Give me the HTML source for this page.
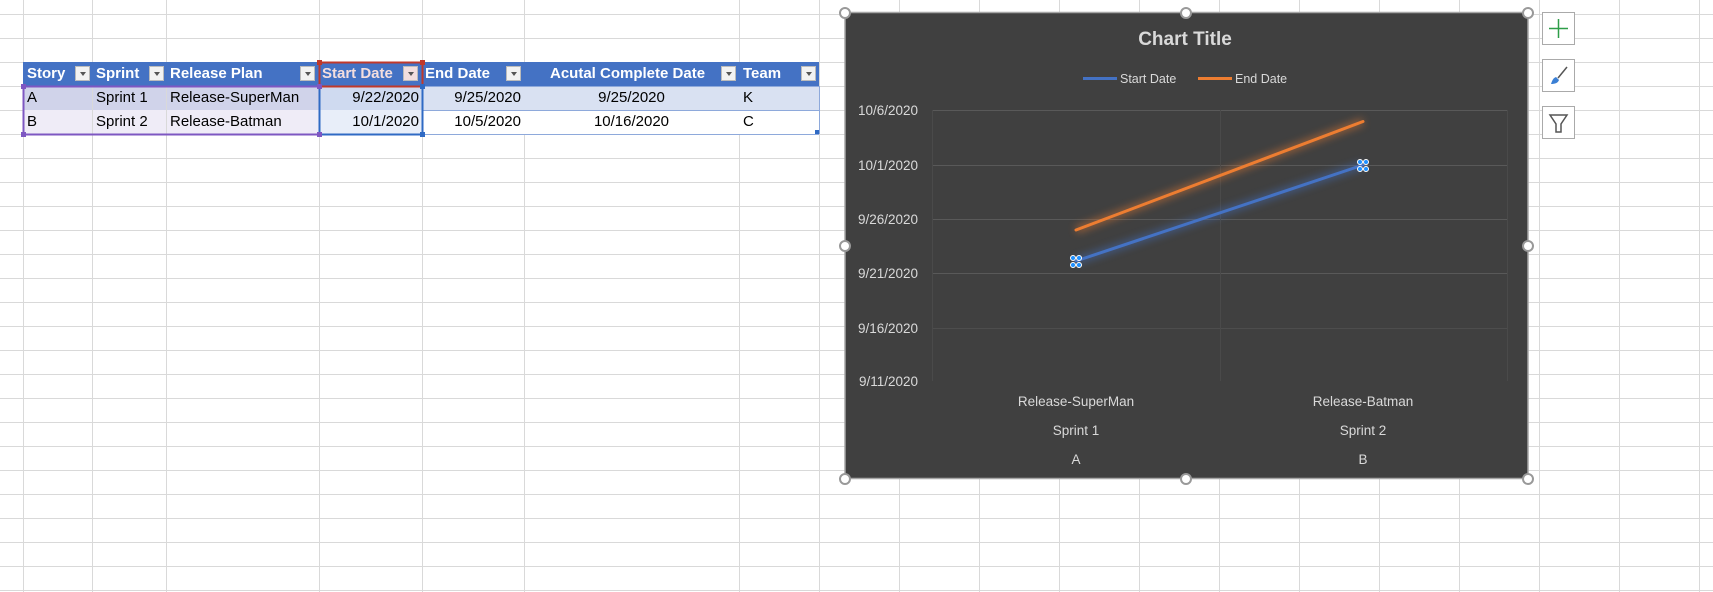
<!DOCTYPE html>
<html><head><meta charset="utf-8"><style>
body{margin:0;width:1713px;height:592px;overflow:hidden;background:#fff;font-family:"Liberation Sans",sans-serif;position:relative}
.a{position:absolute}
.t{position:absolute;font-size:15px;line-height:24px;white-space:nowrap;color:#000}
.h{color:#fff;font-weight:bold}
.dd{position:absolute;width:15px;height:15px;background:#f2f2f2;border:1px solid #bbb;box-sizing:border-box;top:66px}
.dd:after{content:"";position:absolute;left:4px;top:5px;border-left:3px solid transparent;border-right:3px solid transparent;border-top:4px solid #555}
.hd{position:absolute;width:12px;height:12px;border-radius:50%;background:#fff;border:2px solid #999;box-sizing:border-box}
.btn{position:absolute;left:1542px;width:33px;height:33px;border:1px solid #aaa;box-sizing:border-box;background:#fff}
</style></head><body>
<svg class="a" style="left:0;top:0" width="1713" height="592">
<g stroke="#d9d9d9" stroke-width="1">
<line x1="0" y1="14.5" x2="1713" y2="14.5"/><line x1="0" y1="38.5" x2="1713" y2="38.5"/><line x1="0" y1="62.5" x2="1713" y2="62.5"/><line x1="0" y1="86.5" x2="1713" y2="86.5"/><line x1="0" y1="110.5" x2="1713" y2="110.5"/><line x1="0" y1="134.5" x2="1713" y2="134.5"/><line x1="0" y1="158.5" x2="1713" y2="158.5"/><line x1="0" y1="182.5" x2="1713" y2="182.5"/><line x1="0" y1="206.5" x2="1713" y2="206.5"/><line x1="0" y1="230.5" x2="1713" y2="230.5"/><line x1="0" y1="254.5" x2="1713" y2="254.5"/><line x1="0" y1="278.5" x2="1713" y2="278.5"/><line x1="0" y1="302.5" x2="1713" y2="302.5"/><line x1="0" y1="326.5" x2="1713" y2="326.5"/><line x1="0" y1="350.5" x2="1713" y2="350.5"/><line x1="0" y1="374.5" x2="1713" y2="374.5"/><line x1="0" y1="398.5" x2="1713" y2="398.5"/><line x1="0" y1="422.5" x2="1713" y2="422.5"/><line x1="0" y1="446.5" x2="1713" y2="446.5"/><line x1="0" y1="470.5" x2="1713" y2="470.5"/><line x1="0" y1="494.5" x2="1713" y2="494.5"/><line x1="0" y1="518.5" x2="1713" y2="518.5"/><line x1="0" y1="542.5" x2="1713" y2="542.5"/><line x1="0" y1="566.5" x2="1713" y2="566.5"/><line x1="0" y1="590.5" x2="1713" y2="590.5"/>
<line x1="23.5" y1="0" x2="23.5" y2="592"/><line x1="92.5" y1="0" x2="92.5" y2="592"/><line x1="166.5" y1="0" x2="166.5" y2="592"/><line x1="319.5" y1="0" x2="319.5" y2="592"/><line x1="422.5" y1="0" x2="422.5" y2="592"/><line x1="524.5" y1="0" x2="524.5" y2="592"/><line x1="739.5" y1="0" x2="739.5" y2="592"/><line x1="819.5" y1="0" x2="819.5" y2="592"/><line x1="899.5" y1="0" x2="899.5" y2="592"/><line x1="979.5" y1="0" x2="979.5" y2="592"/><line x1="1059.5" y1="0" x2="1059.5" y2="592"/><line x1="1139.5" y1="0" x2="1139.5" y2="592"/><line x1="1219.5" y1="0" x2="1219.5" y2="592"/><line x1="1299.5" y1="0" x2="1299.5" y2="592"/><line x1="1379.5" y1="0" x2="1379.5" y2="592"/><line x1="1459.5" y1="0" x2="1459.5" y2="592"/><line x1="1539.5" y1="0" x2="1539.5" y2="592"/><line x1="1619.5" y1="0" x2="1619.5" y2="592"/><line x1="1699.5" y1="0" x2="1699.5" y2="592"/>
</g>
<rect x="23" y="62" width="796" height="24" fill="#4472c4"/>
<rect x="23" y="86" width="796" height="24" fill="#d9e1f2"/>
<rect x="23" y="110" width="796" height="24" fill="#fff"/>
<rect x="23" y="86" width="296" height="24" fill="#d0d3ea"/>
<rect x="23" y="110" width="296" height="24" fill="#efecf7"/>
<rect x="319" y="86" width="103" height="24" fill="#cfdaf0"/>
<rect x="319" y="110" width="103" height="24" fill="#e8eef9"/>
<g stroke="#d9d9d9"><line x1="92.5" y1="86" x2="92.5" y2="134"/><line x1="166.5" y1="86" x2="166.5" y2="134"/></g>
<line x1="422" y1="86.5" x2="819" y2="86.5" stroke="#8ea9db"/><line x1="422" y1="110.5" x2="819" y2="110.5" stroke="#8ea9db"/><line x1="422" y1="134.5" x2="819" y2="134.5" stroke="#8ea9db"/>
<line x1="819.5" y1="86" x2="819.5" y2="134" stroke="#8ea9db"/>
<rect x="23.5" y="86.5" width="296" height="48" fill="none" stroke="#7e57c2" stroke-width="2"/>
<rect x="319.5" y="86.5" width="103" height="48" fill="none" stroke="#2f6ac4" stroke-width="2"/>
<rect x="319.5" y="62.5" width="103" height="24" fill="none" stroke="#c0392b" stroke-width="2"/>
<g fill="#7e57c2"><rect x="21" y="84" width="5" height="5"/><rect x="317" y="84" width="5" height="5"/><rect x="21" y="132" width="5" height="5"/><rect x="317" y="132" width="5" height="5"/></g>
<g fill="#2f6ac4"><rect x="420" y="84" width="5" height="5"/><rect x="420" y="132" width="5" height="5"/><rect x="815" y="130" width="4" height="4"/></g>
<g fill="#c0392b"><rect x="317" y="60" width="5" height="5"/><rect x="420" y="60" width="5" height="5"/></g>
</svg>
<div class="t h" style="left:27px;top:62px">Story</div>
<div class="t h" style="left:96px;top:62px">Sprint</div>
<div class="t h" style="left:170px;top:62px">Release Plan</div>
<div class="t h" style="left:322px;top:62px;color:#f4dede">Start Date</div>
<div class="t h" style="left:425px;top:62px">End Date</div>
<div class="t h" style="left:550px;top:62px">Acutal Complete Date</div>
<div class="t h" style="left:743px;top:62px">Team</div>
<div class="dd" style="left:75px"></div><div class="dd" style="left:149px"></div><div class="dd" style="left:300px"></div><div class="dd" style="left:403px;background:#f2dede"></div><div class="dd" style="left:506px"></div><div class="dd" style="left:721px"></div><div class="dd" style="left:801px"></div>
<div class="t" style="left:27px;top:86px">A</div><div class="t" style="left:96px;top:86px">Sprint 1</div><div class="t" style="left:170px;top:86px">Release-SuperMan</div><div class="t" style="left:322px;top:86px;width:97px;text-align:right">9/22/2020</div><div class="t" style="left:425px;top:86px;width:96px;text-align:right">9/25/2020</div><div class="t" style="left:524px;top:86px;width:215px;text-align:center">9/25/2020</div><div class="t" style="left:743px;top:86px">K</div>
<div class="t" style="left:27px;top:110px">B</div><div class="t" style="left:96px;top:110px">Sprint 2</div><div class="t" style="left:170px;top:110px">Release-Batman</div><div class="t" style="left:322px;top:110px;width:97px;text-align:right">10/1/2020</div><div class="t" style="left:425px;top:110px;width:96px;text-align:right">10/5/2020</div><div class="t" style="left:524px;top:110px;width:215px;text-align:center">10/16/2020</div><div class="t" style="left:743px;top:110px">C</div>

<svg class="a" style="left:0;top:0" width="1713" height="592">
<defs><filter id="gl" x="-20%" y="-50%" width="140%" height="200%"><feGaussianBlur stdDeviation="4"/></filter></defs>
<rect x="845" y="12.5" width="683" height="466" fill="#404040" stroke="#a6a6a6" stroke-width="1.5"/>
<g stroke="#595959" stroke-width="1"><line x1="932" y1="110.5" x2="1507" y2="110.5"/><line x1="932" y1="165.5" x2="1507" y2="165.5"/><line x1="932" y1="219.5" x2="1507" y2="219.5"/><line x1="932" y1="273.5" x2="1507" y2="273.5"/><line x1="932" y1="328.5" x2="1507" y2="328.5" stroke="#4d4d4d"/><line x1="932.5" y1="110" x2="932.5" y2="381" stroke="#4a4a4a"/><line x1="1220.5" y1="110" x2="1220.5" y2="381" stroke="#4a4a4a"/><line x1="1507.5" y1="110" x2="1507.5" y2="381" stroke="#4a4a4a"/></g>
<text x="1185" y="45" fill="#d9d9d9" font-size="19" font-weight="bold" text-anchor="middle" font-family="Liberation Sans">Chart Title</text>
<line x1="1083" y1="78.5" x2="1117" y2="78.5" stroke="#4472c4" stroke-width="3"/>
<text x="1120" y="83" fill="#d9d9d9" font-size="12.5" font-family="Liberation Sans">Start Date</text>
<line x1="1198" y1="78.5" x2="1232" y2="78.5" stroke="#ed7d31" stroke-width="3"/>
<text x="1235" y="83" fill="#d9d9d9" font-size="12.5" font-family="Liberation Sans">End Date</text>
<g fill="#d9d9d9" font-size="13.5" font-family="Liberation Sans" text-anchor="end"><text x="918" y="115">10/6/2020</text><text x="918" y="170">10/1/2020</text><text x="918" y="224">9/26/2020</text><text x="918" y="278">9/21/2020</text><text x="918" y="333">9/16/2020</text><text x="918" y="386">9/11/2020</text></g>
<g fill="#d9d9d9" font-size="13.5" font-family="Liberation Sans" text-anchor="middle"><text x="1076" y="406">Release-SuperMan</text><text x="1363" y="406">Release-Batman</text><text x="1076" y="435">Sprint 1</text><text x="1363" y="435">Sprint 2</text><text x="1076" y="464">A</text><text x="1363" y="464">B</text></g>
<line x1="1076" y1="230" x2="1363" y2="121.5" stroke="#ed7d31" stroke-width="7" opacity=".5" filter="url(#gl)"/>
<line x1="1076" y1="261" x2="1363" y2="165" stroke="#4472c4" stroke-width="7" opacity=".5" filter="url(#gl)"/>
<line x1="1076" y1="230" x2="1363" y2="121.5" stroke="#ed7d31" stroke-width="3" stroke-linecap="round"/>
<line x1="1076" y1="261" x2="1363" y2="165" stroke="#4472c4" stroke-width="3" stroke-linecap="round"/>
<g fill="#1e90ff" stroke="#fff" stroke-width="1"><circle cx="1073" cy="258" r="2.5"/><circle cx="1079" cy="258" r="2.5"/><circle cx="1073" cy="265" r="2.5"/><circle cx="1079" cy="265" r="2.5"/><circle cx="1360" cy="162" r="2.5"/><circle cx="1366" cy="162" r="2.5"/><circle cx="1360" cy="169" r="2.5"/><circle cx="1366" cy="169" r="2.5"/></g>
</svg>
<div class="hd" style="left:839px;top:7px"></div><div class="hd" style="left:1180px;top:7px"></div><div class="hd" style="left:1522px;top:7px"></div>
<div class="hd" style="left:839px;top:240px"></div><div class="hd" style="left:1522px;top:240px"></div>
<div class="hd" style="left:839px;top:473px"></div><div class="hd" style="left:1180px;top:473px"></div><div class="hd" style="left:1522px;top:473px"></div>
<div class="btn" style="top:12px"><svg width="31" height="31"><path d="M15.5 6V25M6 15.5H25" stroke="#2e9e48" stroke-width="1.5"/></svg></div>
<div class="btn" style="top:59px"><svg width="31" height="31"><path d="M24 7L15 18" stroke="#555" stroke-width="1.5"/><path d="M13 17c-3 1-4 4-5 7 4 0 7-1 8-4z" fill="#3b7fd4"/></svg></div>
<div class="btn" style="top:106px"><svg width="31" height="31"><path d="M7 8H24L18 17V25H13V17Z" fill="none" stroke="#555" stroke-width="1.5"/></svg></div>
</body></html>
